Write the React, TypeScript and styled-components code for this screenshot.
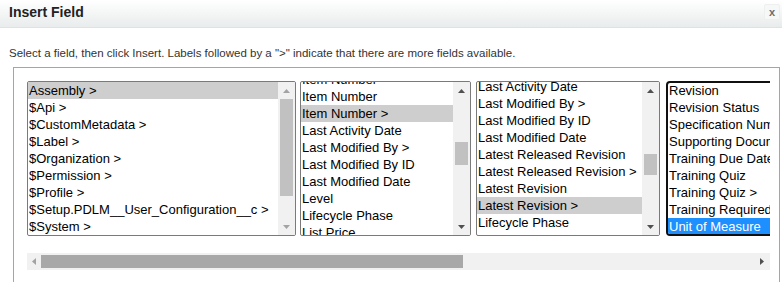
import React from "react";
import styled, { createGlobalStyle, css } from "styled-components";

const GlobalStyle = createGlobalStyle`
    html, body {
        margin: 0;
        padding: 0;
        background: #ffffff;
        font-family: Arial, "Liberation Sans", sans-serif;
    }
`;

const Dialog = styled.div`
    width: 782px;
    height: 282px;
    overflow: hidden;
    background: #ffffff;
`;

const Header = styled.div`
    height: 28px;
    box-sizing: border-box;
    display: flex;
    align-items: center;
    justify-content: space-between;
    padding: 0 2px 3px 9px;
    background: linear-gradient(#ffffff, #e9ecec);
    border-bottom: 1px solid #dde2e3;
`;

const Title = styled.h2`
    margin: 0;
    font-size: 14px;
    font-weight: bold;
    color: #222222;
`;

const CloseButton = styled.button`
    width: 16px;
    height: 16px;
    padding: 0;
    border: 1px solid #eef0f0;
    border-radius: 2px;
    background: #f6f7f7;
    color: #6c6c6c;
    font: bold 11px Arial, "Liberation Sans", sans-serif;
    line-height: 13px;
`;

const Body = styled.div`
    padding: 19px 0 0 0;
`;

const Hint = styled.p`
    margin: 0 0 7px 9px;
    font-size: 11.5px;
    color: #333333;
    line-height: 13px;
`;

const Panel = styled.div`
    margin-left: 13px;
    width: 752px;
    height: 230px;
    padding: 13px 0 0 13px;
    border: 1px solid #a5a5a5;
    border-bottom: none;
`;

const ScrollArea = styled.div`
    width: 743px;
    display: flex;
    flex-direction: column;
    gap: 17px;
`;

const ListRow = styled.div`
    display: flex;
    overflow: hidden;
`;

const ListBox = styled.div<{ $w: number; $gap: number; $focused?: boolean }>`
    position: relative;
    flex: 0 0 auto;
    width: ${(p) => p.$w}px;
    height: 155px;
    margin-right: ${(p) => p.$gap}px;
    box-sizing: border-box;
    border: 1px solid #7a7a7a;
    border-radius: 2px;
    overflow: hidden;
    ${(p) =>
        p.$focused &&
        css`
            border: 2px solid #101010;
            border-radius: 4px;
        `}
`;

const Items = styled.div`
    display: flex;
    flex-direction: column;
`;

const Item = styled.div<{ $sel?: "gray" | "blue" }>`
    height: 17px;
    line-height: 17px;
    padding-left: 1px;
    font-size: 13px;
    color: #000000;
    white-space: nowrap;
    ${(p) => p.$sel === "gray" && css`background: #cecece;`}
    ${(p) =>
        p.$sel === "blue" &&
        css`
            background: #1e8fff;
            color: #ffffff;
        `}
`;

const VBar = styled.div`
    position: absolute;
    top: 0;
    right: 0;
    bottom: 0;
    width: 17px;
    background: #f1f1f1;
    display: flex;
    flex-direction: column;
`;

const ArrowBox = styled.div<{ $w?: number }>`
    height: 17px;
    ${(p) => p.$w && css`width: ${p.$w}px;`}
    display: flex;
    align-items: center;
    justify-content: center;
    flex: 0 0 auto;
`;

const Track = styled.div`
    position: relative;
    flex: 1;
`;

const Thumb = styled.div`
    position: absolute;
    left: 2px;
    right: 2px;
    background: #c1c1c1;
`;

const HBar = styled.div`
    height: 17px;
    background: #f1f1f1;
    display: flex;
    align-items: center;
`;

const HTrack = styled.div`
    position: relative;
    flex: 1;
    height: 100%;
`;

const HThumb = styled.div`
    position: absolute;
    top: 2px;
    bottom: 2px;
    background: #a8a8a8;
`;

const Arrow = ({ dir, color }: { dir: "up" | "down" | "left" | "right"; color: string }) => {
    const pts = {
        up: "0,4 3.5,0 7,4",
        down: "0,0 7,0 3.5,4",
        left: "4,0 4,7 0,3.5",
        right: "0,0 0,7 4,3.5",
    }[dir];
    const vert = dir === "up" || dir === "down";
    return (
        <svg width={vert ? 7 : 4} height={vert ? 4 : 7} viewBox={vert ? "0 0 7 4" : "0 0 4 7"}>
            <polygon points={pts} fill={color} />
        </svg>
    );
};

type ListDef = {
    width: number;
    gap: number;
    items: string[];
    selected: number;
    kind: "gray" | "blue";
    offset: number;
    focused?: boolean;
    thumb?: { top: number; height: number; arrow: string };
};

const lists: ListDef[] = [
    {
        width: 269,
        gap: 4,
        items: [
            "Assembly >",
            "$Api >",
            "$CustomMetadata >",
            "$Label >",
            "$Organization >",
            "$Permission >",
            "$Profile >",
            "$Setup.PDLM__User_Configuration__c >",
            "$System >",
        ],
        selected: 0,
        kind: "gray",
        offset: 0,
        thumb: { top: 0, height: 97, arrow: "#a3a3a3" },
    },
    {
        width: 171,
        gap: 5,
        items: [
            "Item Number",
            "Item Number",
            "Item Number >",
            "Last Activity Date",
            "Last Modified By >",
            "Last Modified By ID",
            "Last Modified Date",
            "Level",
            "Lifecycle Phase",
            "List Price",
        ],
        selected: 2,
        kind: "gray",
        offset: -11,
        thumb: { top: 43, height: 23, arrow: "#505050" },
    },
    {
        width: 184,
        gap: 6,
        items: [
            "Last Activity Date",
            "Last Modified By >",
            "Last Modified By ID",
            "Last Modified Date",
            "Latest Released Revision",
            "Latest Released Revision >",
            "Latest Revision",
            "Latest Revision >",
            "Lifecycle Phase",
            "OBSOLETE",
        ],
        selected: 7,
        kind: "gray",
        offset: -4,
        thumb: { top: 55, height: 21, arrow: "#505050" },
    },
    {
        width: 150,
        gap: 0,
        items: [
            "Revision",
            "Revision Status",
            "Specification Number",
            "Supporting Documents",
            "Training Due Date",
            "Training Quiz",
            "Training Quiz >",
            "Training Required",
            "Unit of Measure",
        ],
        selected: 8,
        kind: "blue",
        offset: -1,
        focused: true,
    },
];

function FieldList({ def }: { def: ListDef }) {
    return (
        <ListBox $w={def.width} $gap={def.gap} $focused={def.focused}>
            <Items style={{ marginTop: def.offset }}>
                {def.items.map((label, i) => (
                    <Item key={i} $sel={i === def.selected ? def.kind : undefined}>
                        {label}
                    </Item>
                ))}
            </Items>
            {def.thumb && (
                <VBar>
                    <ArrowBox>
                        <Arrow dir="up" color={def.thumb.arrow} />
                    </ArrowBox>
                    <Track>
                        <Thumb style={{ top: def.thumb.top, height: def.thumb.height }} />
                    </Track>
                    <ArrowBox>
                        <Arrow dir="down" color={def.thumb.arrow} />
                    </ArrowBox>
                </VBar>
            )}
        </ListBox>
    );
}

export default function App() {
    return (
        <Dialog>
            <GlobalStyle />
            <Header>
                <Title>Insert Field</Title>
                <CloseButton>x</CloseButton>
            </Header>
            <Body>
                <Hint>
                    Select a field, then click Insert. Labels followed by a "&gt;" indicate that there are more
                    fields available.
                </Hint>
                <Panel>
                    <ScrollArea>
                        <ListRow>
                            {lists.map((def, i) => (
                                <FieldList key={i} def={def} />
                            ))}
                        </ListRow>
                        <HBar>
                            <ArrowBox $w={14}>
                                <Arrow dir="left" color="#a3a3a3" />
                            </ArrowBox>
                            <HTrack>
                                <HThumb style={{ left: 0, width: 422 }} />
                            </HTrack>
                            <ArrowBox $w={17}>
                                <Arrow dir="right" color="#505050" />
                            </ArrowBox>
                        </HBar>
                    </ScrollArea>
                </Panel>
            </Body>
        </Dialog>
    );
}
